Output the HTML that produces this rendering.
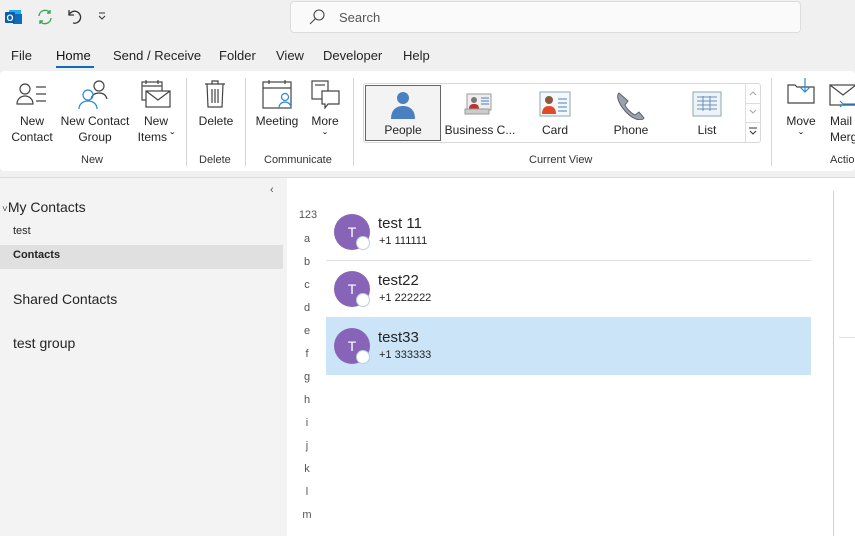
<!DOCTYPE html>
<html><head><meta charset="utf-8">
<style>
*{margin:0;padding:0;box-sizing:border-box}
body{width:855px;height:536px;overflow:hidden;background:#f0f0f0;font-family:"Segoe UI","Liberation Sans",sans-serif;color:#242424;position:relative}
.a{position:absolute;white-space:nowrap}
.lbl{font-size:12px;text-align:center;line-height:16px}
.grp{font-size:11px;color:#333}
.sep{position:absolute;width:1px;background:#d6d6d6;top:78px;height:88px}
svg{position:absolute}
.alpha{position:absolute;left:296px;width:22px;text-align:center;font-size:11px;color:#555}
</style></head><body>
<svg style="left:4px;top:8px" width="18" height="18" viewBox="0 0 18 18"><rect x="5" y="2" width="12" height="13" fill="#28a8ea"/><rect x="9" y="6" width="9" height="10" fill="#0f6cbd"/><rect x="1" y="4" width="10" height="11" rx="1" fill="#0a5ea8"/><text x="6" y="13" font-size="9" fill="#fff" text-anchor="middle" font-family="Liberation Sans" font-weight="bold">O</text></svg>
<svg style="left:36px;top:8px" width="18" height="18" viewBox="0 0 18 18" fill="none" stroke="#3aa655" stroke-width="1.4"><path d="M3 8a6 6 0 0 1 11-3M15 10a6 6 0 0 1-11 3"/><path d="M14 2v3h-3M4 16v-3h3"/></svg>
<svg style="left:65px;top:7px" width="18" height="18" viewBox="0 0 18 18" fill="none" stroke="#333" stroke-width="1.3"><path d="M4 3v5h5"/><path d="M4 8a6 6 0 1 1 4 8"/></svg>
<svg style="left:97px;top:12px" width="10" height="8" viewBox="0 0 10 8" fill="none" stroke="#333" stroke-width="1"><path d="M2 1h6M2 4l3 3 3-3"/></svg>
<div class="a" style="left:290px;top:1px;width:511px;height:32px;background:#fafafa;border:1px solid #ddd;border-radius:4px"></div>
<svg style="left:308px;top:8px" width="18" height="18" viewBox="0 0 18 18" fill="none" stroke="#444" stroke-width="1.1"><circle cx="11" cy="7" r="5"/><path d="M7.5 10.5L2 16"/></svg>
<div class="a" style="left:339px;top:10px;font-size:13px;color:#555">Search</div>
<div class="a" style="top:48px;font-size:13px;left:11px">File</div>
<div class="a" style="top:48px;font-size:13px;left:56px;color:#111">Home</div>
<div class="a" style="left:56px;top:66px;width:38px;height:2px;background:#0f6cbd"></div>
<div class="a" style="top:48px;font-size:13px;left:113px">Send / Receive</div>
<div class="a" style="top:48px;font-size:13px;left:219px">Folder</div>
<div class="a" style="top:48px;font-size:13px;left:276px">View</div>
<div class="a" style="top:48px;font-size:13px;left:323px">Developer</div>
<div class="a" style="top:48px;font-size:13px;left:403px">Help</div>
<div class="a" style="left:0;top:71px;width:855px;height:100px;background:#fff;border-radius:4px"></div>
<svg style="left:16px;top:81px" width="32" height="26" viewBox="0 0 32 26" fill="none" stroke="#444" stroke-width="1.2"><circle cx="9" cy="8" r="5"/><path d="M1 23c0-5 4-8 8-8s8 3 8 8z"/><path d="M20 6h10M20 13h10M20 20h10"/></svg>
<div class="a lbl" style="left:6px;top:113px;width:52px">New<br>Contact</div>
<svg style="left:78px;top:79px" width="34" height="30" viewBox="0 0 34 30" fill="none" stroke-width="1.2"><circle cx="21" cy="7" r="5" stroke="#444"/><path d="M13 20c1-4 4-6 8-6s7 2 8 6" stroke="#444"/><circle cx="10" cy="16" r="5" stroke="#2a8ad4"/><path d="M1 30c0-5 4-8 9-8s9 3 9 8" stroke="#2a8ad4"/></svg>
<div class="a lbl" style="left:59px;top:113px;width:72px">New Contact<br>Group</div>
<svg style="left:140px;top:79px" width="32" height="30" viewBox="0 0 32 30" fill="none" stroke="#444" stroke-width="1.2"><rect x="2" y="3" width="20" height="18"/><path d="M2 7h20M6 1v4M18 1v4"/><rect x="6" y="12" width="24" height="16" fill="#fff"/><path d="M6 12l12 9 12-9"/></svg>
<div class="a lbl" style="left:132px;top:113px;width:48px">New<br>Items &#711;</div>
<div class="sep" style="left:186px"></div>
<svg style="left:203px;top:79px" width="24" height="30" viewBox="0 0 24 30" fill="none" stroke="#444" stroke-width="1.2"><path d="M2 5h20M9 5V2h6v3"/><path d="M4 5l1 23h14l1-23"/><path d="M9 10v14M12 10v14M15 10v14"/></svg>
<div class="a lbl" style="left:195px;top:113px;width:42px">Delete</div>
<div class="sep" style="left:245px"></div>
<svg style="left:261px;top:79px" width="34" height="30" viewBox="0 0 34 30" fill="none" stroke-width="1.2"><rect x="2" y="3" width="28" height="26" stroke="#444"/><path d="M2 9h28M8 1v4M24 1v4" stroke="#444"/><circle cx="24" cy="18" r="3.5" stroke="#2a8ad4"/><path d="M18 29c0-4 3-6 6-6s6 2 6 6" stroke="#2a8ad4"/></svg>
<div class="a lbl" style="left:253px;top:113px;width:48px">Meeting</div>
<svg style="left:310px;top:79px" width="32" height="30" viewBox="0 0 32 30" fill="none" stroke="#444" stroke-width="1.2"><rect x="2" y="2" width="16" height="18"/><path d="M5 6h10"/><path d="M12 12h17v13H18l-3 4v-4h-3z" fill="#fff"/></svg>
<div class="a lbl" style="left:303px;top:113px;width:44px">More<br>&#711;</div>
<div class="grp a" style="left:81px;top:154px">New</div>
<div class="grp a" style="left:199px;top:154px">Delete</div>
<div class="grp a" style="left:264px;top:154px">Communicate</div>
<div class="sep" style="left:353px"></div>
<div class="a" style="left:363px;top:83px;width:398px;height:60px;border:1px solid #d8d8d8;border-radius:3px"></div>
<div class="a" style="left:365px;top:85px;width:76px;height:56px;background:#f3f3f3;border:1px solid #666;"></div>
<svg style="left:390px;top:90px" width="26" height="30" viewBox="0 0 26 30"><circle cx="13" cy="8" r="6" fill="#4a80c0"/><path d="M1 29c0-9 5-13 12-13s12 4 12 13z" fill="#4a80c0"/></svg>
<div class="a lbl" style="left:365px;top:122px;width:76px">People</div>
<svg style="left:464px;top:92px" width="30" height="26" viewBox="0 0 30 26"><rect x="3" y="2" width="24" height="16" fill="#eee" stroke="#999"/><circle cx="10" cy="8" r="3" fill="#777"/><path d="M5 17c0-4 2-5 5-5s5 1 5 5z" fill="#b33"/><path d="M17 6h8M17 9h8M17 12h8" stroke="#4a80c0"/><rect x="1" y="17" width="24" height="5" fill="#ccc" stroke="#999"/></svg>
<div class="a lbl" style="left:444px;top:122px;width:72px">Business C...</div>
<svg style="left:539px;top:91px" width="32" height="26" viewBox="0 0 32 26"><rect x="1" y="1" width="30" height="24" fill="#f4f8fc" stroke="#8aa"/><circle cx="10" cy="9" r="4" fill="#8a5a3a"/><path d="M3 23c0-6 3-8 7-8s7 2 7 8z" fill="#e04a2a"/><path d="M19 8h9M19 12h9M19 16h9M19 20h9" stroke="#4a80c0"/></svg>
<div class="a lbl" style="left:520px;top:122px;width:70px">Card</div>
<svg style="left:615px;top:90px" width="32" height="30" viewBox="0 0 32 30"><path d="M4 3c-4 4 2 14 8 20s14 9 17 5l-5-6-4 3c-3-1-9-7-10-10l3-4z" fill="#9aa3ad" stroke="#5a636d"/></svg>
<div class="a lbl" style="left:596px;top:122px;width:70px">Phone</div>
<svg style="left:692px;top:91px" width="30" height="26" viewBox="0 0 30 26"><rect x="1" y="1" width="28" height="24" fill="#eef3fa" stroke="#8aa"/><path d="M5 6h20M5 10h20M5 14h20M5 18h20M11 5v15M18 5v15" stroke="#6c8fb8"/></svg>
<div class="a lbl" style="left:672px;top:122px;width:70px">List</div>
<div class="a" style="left:745px;top:84px;width:16px;height:58px;border-left:1px solid #ddd"></div>
<div class="a" style="left:746px;top:103px;width:15px;border-top:1px solid #ddd"></div>
<div class="a" style="left:746px;top:122px;width:15px;border-top:1px solid #ddd"></div>
<svg style="left:749px;top:90px" width="8" height="6" viewBox="0 0 8 6" fill="none" stroke="#aaa"><path d="M1 5l3-3 3 3"/></svg>
<svg style="left:749px;top:109px" width="8" height="6" viewBox="0 0 8 6" fill="none" stroke="#aaa"><path d="M1 1l3 3 3-3"/></svg>
<svg style="left:748px;top:127px" width="10" height="9" viewBox="0 0 10 9" fill="none" stroke="#333"><path d="M1 1h8M2 4l3 3 3-3"/></svg>
<div class="grp a" style="left:529px;top:154px">Current View</div>
<div class="sep" style="left:771px"></div>
<svg style="left:786px;top:77px" width="30" height="30" viewBox="0 0 30 30" fill="none" stroke-width="1.2"><path d="M2 8h7l2 2h17v16H2z" stroke="#444"/><path d="M19 1v14M14 10l5 5 5-5" stroke="#2a8ad4"/></svg>
<div class="a lbl" style="left:780px;top:113px;width:42px">Move<br>&#711;</div>
<svg style="left:829px;top:83px" width="26" height="26" viewBox="0 0 26 26" fill="none" stroke-width="1.2"><rect x="1" y="2" width="26" height="20" stroke="#444"/><path d="M1 2l13 10 13-10" stroke="#444"/><path d="M11 18l3 3-3 3M14 21h12" stroke="#2a8ad4"/></svg>
<div class="a lbl" style="left:830px;top:113px;width:40px;text-align:left">Mail<br>Merg</div>
<div class="grp a" style="left:830px;top:154px">Actio</div>
<div class="a" style="left:0;top:177px;width:855px;height:1px;background:#dcdcdc"></div>
<div class="a" style="left:0;top:178px;width:287px;height:358px;background:#f3f3f3"></div>
<div class="a" style="left:287px;top:178px;width:568px;height:358px;background:#fff"></div>
<div class="a" style="left:270px;top:184px;font-size:11px;color:#555">&#8249;</div>
<div class="a" style="left:2px;top:199px;font-size:14px"><span style="font-size:10px;color:#555">&#709;</span>My Contacts</div>
<div class="a" style="left:13px;top:225px;font-size:11px">test</div>
<div class="a" style="left:0;top:245px;width:283px;height:24px;background:#e0e0e0"></div>
<div class="a" style="left:13px;top:249px;font-size:11px;font-weight:bold">Contacts</div>
<div class="a" style="left:13px;top:291px;font-size:14px">Shared Contacts</div>
<div class="a" style="left:13px;top:335px;font-size:14px">test group</div>
<div class="alpha" style="left:297px;top:209px">123</div>
<div class="alpha" style="top:233px">a</div>
<div class="alpha" style="top:256px">b</div>
<div class="alpha" style="top:279px">c</div>
<div class="alpha" style="top:302px">d</div>
<div class="alpha" style="top:325px">e</div>
<div class="alpha" style="top:348px">f</div>
<div class="alpha" style="top:371px">g</div>
<div class="alpha" style="top:394px">h</div>
<div class="alpha" style="top:417px">i</div>
<div class="alpha" style="top:440px">j</div>
<div class="alpha" style="top:463px">k</div>
<div class="alpha" style="top:486px">l</div>
<div class="alpha" style="top:509px">m</div>
<div class="a" style="left:326px;top:260px;width:485px;height:1px;background:#e1e1e1"></div>
<div class="a" style="left:326px;top:317px;width:485px;height:58px;background:#cce4f7"></div>
<div class="a" style="left:833px;top:191px;width:1px;height:345px;background:#d0d0d0"></div>
<div class="a" style="left:839px;top:337px;width:16px;height:1px;background:#e1e1e1"></div>
<div class="a" style="left:334px;top:214px;width:36px;height:36px;border-radius:50%;background:#8764b8;color:#fff;font-size:14px;text-align:center;line-height:36px">T</div>
<div class="a" style="left:356px;top:236px;width:14px;height:14px;border-radius:50%;background:#fff;border:1.5px solid #b8cfe0"></div>
<div class="a" style="left:378px;top:215px;font-size:15px">test 11</div>
<div class="a" style="left:379px;top:235px;font-size:11px">+1 111111</div>
<div class="a" style="left:334px;top:271px;width:36px;height:36px;border-radius:50%;background:#8764b8;color:#fff;font-size:14px;text-align:center;line-height:36px">T</div>
<div class="a" style="left:356px;top:293px;width:14px;height:14px;border-radius:50%;background:#fff;border:1.5px solid #b8cfe0"></div>
<div class="a" style="left:378px;top:272px;font-size:15px">test22</div>
<div class="a" style="left:379px;top:292px;font-size:11px">+1 222222</div>
<div class="a" style="left:334px;top:328px;width:36px;height:36px;border-radius:50%;background:#8764b8;color:#fff;font-size:14px;text-align:center;line-height:36px">T</div>
<div class="a" style="left:356px;top:350px;width:14px;height:14px;border-radius:50%;background:#fff;border:1.5px solid #b8cfe0"></div>
<div class="a" style="left:378px;top:329px;font-size:15px">test33</div>
<div class="a" style="left:379px;top:349px;font-size:11px">+1 333333</div>
</body></html>
